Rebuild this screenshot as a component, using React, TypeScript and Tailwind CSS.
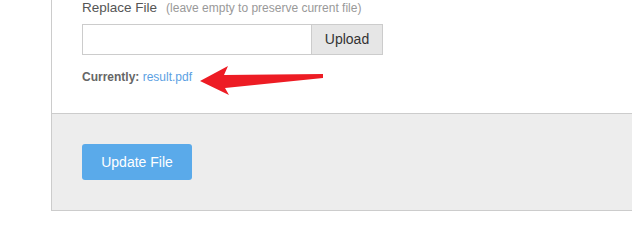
import React from "react";

export default function App() {
  return (
    <div className="relative w-[632px] h-[244px] overflow-hidden bg-white font-['Liberation_Sans',Arial,sans-serif]">
      <div className="ml-[51px] w-[700px] border-l border-b border-[#cccccc]">
        <div className="pl-[30px] pb-[28px]">
          <div className="flex items-baseline h-4 leading-4">
            <span className="text-[13.5px] text-[#555555]">Replace File</span>
            <span className="ml-[9px] text-[12px] text-[#999999]">(leave empty to preserve current file)</span>
          </div>
          <div className="mt-[8px] flex h-[31px] w-[301px]">
            <div className="flex-1 border border-[#cccccc] bg-white" />
            <button className="w-[71px] border border-l-0 border-[#cccccc] bg-[#e6e6e6] text-[14px] text-[#333333]">
              Upload
            </button>
          </div>
          <div className="mt-[14px] h-4 leading-4 text-[12px]">
            <span className="font-bold text-[#666666]">Currently:</span>{" "}
            <a className="text-[#5b9fe3]">result.pdf</a>
          </div>
        </div>
        <div className="flex h-[97px] items-center border-t border-[#cccccc] bg-[#ededed] pl-[30px]">
          <button className="h-[36px] w-[110px] rounded-[3px] bg-[#5aaaea] text-[14px] text-white">
            Update File
          </button>
        </div>
      </div>
      <svg className="absolute left-0 top-0" width="632" height="244" viewBox="0 0 632 244">
        <path d="M200 81 L228 66 L224 75 L323 74 L323 78 L225 88 L229 95 Z" fill="#ed1c24" />
      </svg>
    </div>
  );
}
